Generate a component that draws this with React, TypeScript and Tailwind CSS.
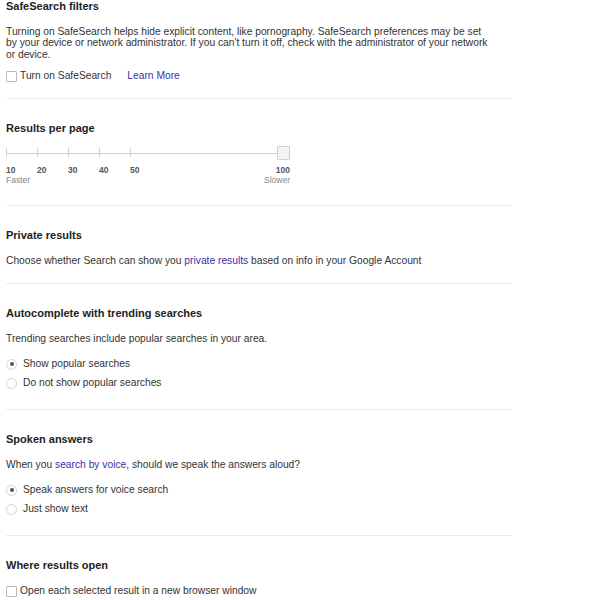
import React from "react";

const font = "font-['Liberation_Sans',Arial,sans-serif]";

function Heading({ children }: { children: React.ReactNode }) {
  return <h2 className="h-[13px] text-[11px] leading-[13px] font-bold text-[#222]">{children}</h2>;
}

function Body({ children }: { children: React.ReactNode }) {
  return <p className="mt-[12.5px] max-w-[485px] text-[10.25px] leading-[11.5px] text-[#333]">{children}</p>;
}

function Checkbox({ label }: { label: string }) {
  return (
    <label className="flex items-center gap-[3px] text-[10.25px] text-[#333]">
      <span className="h-[11px] w-[11px] rounded-[1px] border border-[#b8b8b8] bg-white" />
      <span>{label}</span>
    </label>
  );
}

function Radio({ label, checked }: { label: string; checked?: boolean }) {
  return (
    <label className="flex h-[19px] items-center gap-[6px] text-[10.25px] text-[#333]">
      <span className="flex h-[11px] w-[11px] items-center justify-center rounded-full border border-[#d4d4d4] bg-white">
        {checked && <span className="h-[4px] w-[4px] rounded-full bg-[#555]" />}
      </span>
      <span>{label}</span>
    </label>
  );
}

const ticks = ["10", "20", "30", "40", "50"];

function ResultsSlider() {
  return (
    <div className="mt-[11.5px] w-[284px]">
      <div className="relative h-[14px]">
        <div className="absolute left-0 right-[12px] top-[6.5px] h-px bg-[#d0d0d0]" />
        <div className="absolute left-0 top-[2px] flex">
          {ticks.map((t) => (
            <div key={t} className="w-[31px]">
              <div className="h-[9px] w-px bg-[#d0d0d0]" />
            </div>
          ))}
        </div>
        <div className="absolute right-0 top-0 h-[14px] w-[13px] rounded-[1px] border border-[#d0d0d0] bg-[#f3f3f3]" />
      </div>
      <div className="mt-[5px] flex text-[8.5px] leading-[10px] font-bold text-[#555]">
        {ticks.map((t) => (
          <span key={t} className="w-[31px]">
            {t}
          </span>
        ))}
        <span className="ml-auto">100</span>
      </div>
      <div className="flex text-[8.5px] leading-[10px] text-[#888]">
        <span>Faster</span>
        <span className="ml-auto">Slower</span>
      </div>
    </div>
  );
}

export default function App() {
  return (
    <div className={`${font} min-h-[600px] w-[600px] bg-white pl-[6px]`}>
      <div className="w-[506px]">
        <section className="border-b border-[#ebebeb] pb-[16px]">
          <Heading>SafeSearch filters</Heading>
          <Body>
            Turning on SafeSearch helps hide explicit content, like pornography. SafeSearch preferences may be set
            by your device or network administrator. If you can't turn it off, check with the administrator of
            your network or device.
          </Body>
          <div className="mt-[10px] flex h-[12px] items-center">
            <Checkbox label="Turn on SafeSearch" />
            <a href="#" className="ml-[16px] text-[10.25px] text-[#3b2fa6]">
              Learn More
            </a>
          </div>
        </section>

        <section className="border-b border-[#ebebeb] pt-[22.5px] pb-[20px]">
          <Heading>Results per page</Heading>
          <ResultsSlider />
        </section>

        <section className="border-b border-[#ebebeb] pt-[23px] pb-[17px]">
          <Heading>Private results</Heading>
          <Body>
            Choose whether Search can show you{" "}
            <a href="#" className="text-[#3b2fa6]">
              private results
            </a>{" "}
            based on info in your Google Account
          </Body>
        </section>

        <section className="border-b border-[#ebebeb] pt-[23px] pb-[16.5px]">
          <Heading>Autocomplete with trending searches</Heading>
          <Body>Trending searches include popular searches in your area.</Body>
          <div className="mt-[10.5px] flex flex-col">
            <Radio label="Show popular searches" checked />
            <Radio label="Do not show popular searches" />
          </div>
        </section>

        <section className="border-b border-[#ebebeb] pt-[23px] pb-[16.5px]">
          <Heading>Spoken answers</Heading>
          <Body>
            When you{" "}
            <a href="#" className="text-[#3b2fa6]">
              search by voice
            </a>
            , should we speak the answers aloud?
          </Body>
          <div className="mt-[10.5px] flex flex-col">
            <Radio label="Speak answers for voice search" checked />
            <Radio label="Just show text" />
          </div>
        </section>

        <section className="pt-[23px]">
          <Heading>Where results open</Heading>
          <div className="mt-[13px] flex h-[12px] items-center">
            <Checkbox label="Open each selected result in a new browser window" />
          </div>
        </section>
      </div>
    </div>
  );
}
